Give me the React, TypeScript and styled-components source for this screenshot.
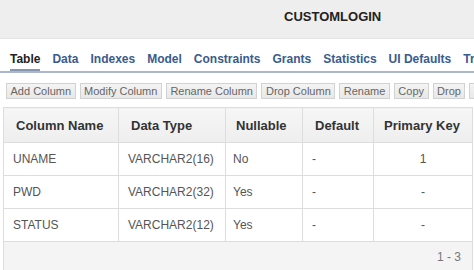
import styled, { createGlobalStyle } from "styled-components";

const GlobalStyle = createGlobalStyle`
  body {
    margin: 0;
    width: 474px;
    height: 270px;
    overflow: hidden;
    background: #ffffff;
    font-family: "Liberation Sans", Arial, sans-serif;
  }
`;

type Column = {
  name: string;
  type: string;
  nullable: string;
  def: string;
  pk: string;
};

const tabs = [
  "Table",
  "Data",
  "Indexes",
  "Model",
  "Constraints",
  "Grants",
  "Statistics",
  "UI Defaults",
  "Triggers",
];

const actions = [
  "Add Column",
  "Modify Column",
  "Rename Column",
  "Drop Column",
  "Rename",
  "Copy",
  "Drop",
  "Truncate",
];

const columns: Column[] = [
  { name: "UNAME", type: "VARCHAR2(16)", nullable: "No", def: "-", pk: "1" },
  { name: "PWD", type: "VARCHAR2(32)", nullable: "Yes", def: "-", pk: "-" },
  { name: "STATUS", type: "VARCHAR2(12)", nullable: "Yes", def: "-", pk: "-" },
];

function App() {
  return (
    <Page>
      <GlobalStyle />
      <Header>
        <Title>CUSTOMLOGIN</Title>
      </Header>
      <TabBar>
        {tabs.map((tab, index) => (
          <Tab key={tab} $active={index === 0}>
            {tab}
          </Tab>
        ))}
      </TabBar>
      <Toolbar>
        {actions.map((action) => (
          <ActionButton key={action}>{action}</ActionButton>
        ))}
      </Toolbar>
      <Table>
        <colgroup>
          <col style={{ width: 115 }} />
          <col style={{ width: 107 }} />
          <col style={{ width: 77 }} />
          <col style={{ width: 71 }} />
          <col />
        </colgroup>
        <thead>
          <tr>
            <Th>Column Name</Th>
            <Th>Data Type</Th>
            <Th $tight>Nullable</Th>
            <Th>Default</Th>
            <Th $tight>Primary Key</Th>
          </tr>
        </thead>
        <tbody>
          {columns.map((col) => (
            <tr key={col.name}>
              <Td>{col.name}</Td>
              <Td>{col.type}</Td>
              <Td $tight>{col.nullable}</Td>
              <Td>{col.def}</Td>
              <Td $center>{col.pk}</Td>
            </tr>
          ))}
          <tr>
            <Footer colSpan={5}>1 - 3</Footer>
          </tr>
        </tbody>
      </Table>
    </Page>
  );
}

export default App;

const Page = styled.div`
  width: 474px;
  height: 270px;
  overflow: hidden;
`;

const Header = styled.div`
  height: 39px;
  background: #eeeeee;
  border-bottom: 1px solid #e4e4e4;
  padding-left: 284px;
  box-sizing: border-box;
`;

const Title = styled.div`
  padding-top: 9px;
  font-size: 13px;
  line-height: 15px;
  font-weight: 700;
  color: #222;
`;

const TabBar = styled.div`
  display: flex;
  gap: 12px;
  padding: 13px 0 0 10px;
  border-bottom: 2px solid #abb7c9;
  white-space: nowrap;
  overflow: hidden;
`;

const Tab = styled.div<{ $active?: boolean }>`
  flex-shrink: 0;
  font-size: 12px;
  line-height: 14px;
  font-weight: 700;
  color: ${(p) => (p.$active ? "#222" : "#3a5b8d")};
  padding-bottom: 3px;
  border-bottom: 4px solid ${(p) => (p.$active ? "#8797b2" : "transparent")};
  border-radius: 2px;
  margin-bottom: -2px;
`;

const Toolbar = styled.div`
  display: flex;
  gap: 4px;
  margin-top: 10px;
  padding-left: 6px;
  white-space: nowrap;
  overflow: hidden;
`;

const ActionButton = styled.button`
  flex-shrink: 0;
  height: 16px;
  margin: 0;
  padding: 0 3.5px;
  font-family: "Liberation Sans", Arial, sans-serif;
  font-size: 11px;
  line-height: 14px;
  color: #666;
  background: linear-gradient(#f4f4f4, #e8e8e8);
  border: 1px solid #d2d2d2;
  border-radius: 0;
`;

const Table = styled.table`
  margin: 8px 0 0 3px;
  width: 470px;
  table-layout: fixed;
  border-collapse: collapse;
  border: 1px solid #dddddd;
`;

const Th = styled.th<{ $tight?: boolean }>`
  height: 34px;
  padding: 0 0 0 ${(p) => (p.$tight ? "10px" : "12px")};
  text-align: left;
  font-size: 13px;
  font-weight: 700;
  color: #333;
  background: linear-gradient(#f6f6f6, #eeeeee);
  border: 1px solid #dddddd;
  white-space: nowrap;
`;

const Td = styled.td<{ $center?: boolean; $tight?: boolean }>`
  height: 32px;
  padding: 0 0 0 ${(p) => (p.$center ? "0" : p.$tight ? "7px" : "9px")};
  text-align: ${(p) => (p.$center ? "center" : "left")};
  font-size: 12px;
  color: #555;
  border: 1px solid #dddddd;
  white-space: nowrap;
`;

const Footer = styled.td`
  height: 30px;
  padding: 0 11px 0 0;
  text-align: right;
  font-size: 12px;
  color: #777;
  background: #f4f4f4;
  border: 1px solid #dddddd;
`;
